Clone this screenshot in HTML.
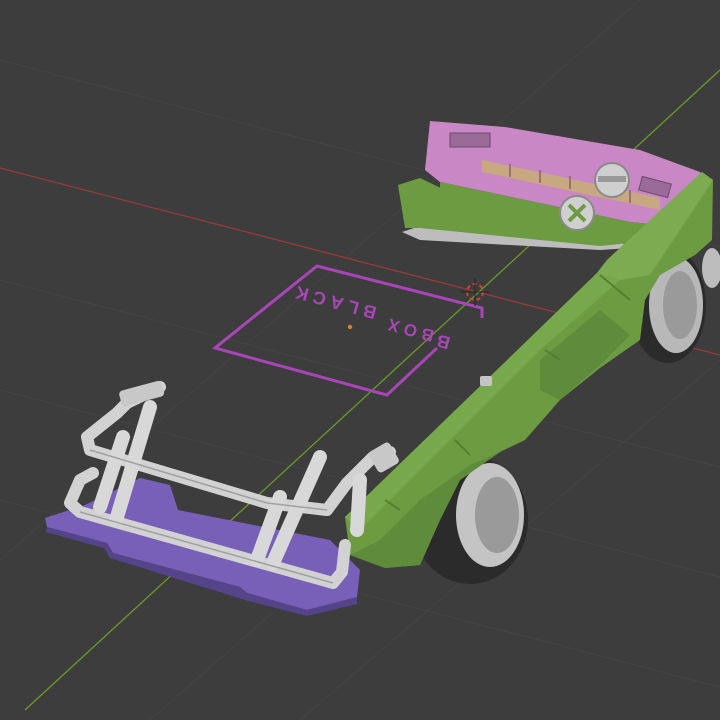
<!DOCTYPE html>
<html><head><meta charset="utf-8"><style>
html,body{margin:0;padding:0;background:#3d3d3d;}
svg{display:block}
</style></head><body>
<svg width="720" height="720" viewBox="0 0 720 720" xmlns="http://www.w3.org/2000/svg">
<rect width="720" height="720" fill="#3d3d3d"/>
<g stroke="#444" stroke-width="1">
<line x1="0" y1="60" x2="720" y2="247"/><line x1="0" y1="280" x2="720" y2="467"/><line x1="0" y1="390" x2="720" y2="577"/><line x1="0" y1="500" x2="720" y2="687"/>
<line x1="0" y1="560" x2="640" y2="0"/><line x1="150" y1="720" x2="720" y2="220"/><line x1="300" y1="720" x2="720" y2="360"/>
</g>
<line x1="0" y1="168" x2="720" y2="355" stroke="#9a3a3a" stroke-width="1.3"/>
<line x1="25" y1="710" x2="720" y2="70" stroke="#6a9a2a" stroke-width="1.3"/>
<!-- purple square -->
<polyline points="482,318 482,308 317,266 215,348 387,395 437,348" fill="none" stroke="#a846b8" stroke-width="3"/>
<g fill="#a846b8" font-family="Liberation Sans, sans-serif" font-weight="bold">
<text transform="translate(335,296) rotate(195)" font-size="18" letter-spacing="5" text-anchor="middle">BLACK</text>
<text transform="translate(410,324) rotate(195)" font-size="17" letter-spacing="5" text-anchor="middle">BOX</text>
<text transform="translate(445,336) rotate(195)" font-size="18" text-anchor="middle">B</text>
</g>
<circle cx="350" cy="327" r="2.2" fill="#e08020"/>
<circle cx="475" cy="292" r="8" fill="none" stroke="#d04040" stroke-width="2" stroke-dasharray="4 3"/>
<line x1="475" y1="278" x2="475" y2="306" stroke="#222" stroke-width="1"/>
<line x1="461" y1="292" x2="489" y2="292" stroke="#222" stroke-width="1"/>
<!-- rear wheel -->
<ellipse cx="712" cy="268" rx="10" ry="20" fill="#bdbdbd"/>
<ellipse cx="668" cy="305" rx="38" ry="58" fill="#2b2b2b"/>
<ellipse cx="676" cy="305" rx="27" ry="48" fill="#b8b8b8"/>
<ellipse cx="680" cy="305" rx="17" ry="34" fill="#9a9a9a"/>
<!-- front wheel -->
<ellipse cx="470" cy="520" rx="58" ry="64" fill="#2b2b2b"/>
<ellipse cx="490" cy="515" rx="34" ry="52" fill="#c4c4c4"/>
<ellipse cx="497" cy="515" rx="22" ry="38" fill="#9a9a9a"/>
<!-- front bumper assembly -->
<polygon points="402,232 420,240 600,250 630,248 612,236 420,226" fill="#bdbdbd"/>
<polygon points="398,185 420,178 445,190 640,225 640,242 600,246 420,228 405,228" fill="#6c9b42"/>
<polygon points="430,121 505,127 640,150 700,172 712,185 690,205 660,225 630,222 440,182 425,170" fill="#c987c5"/>
<g fill="#9a6a98" stroke="#6f4a6d" stroke-width="1">
<rect x="450" y="133" width="40" height="14"/><rect x="640" y="180" width="30" height="14" transform="rotate(15 655 187)"/>
</g>
<polygon points="482,160 660,198 660,210 482,172" fill="#c8a880"/>
<g stroke="#8a6070" stroke-width="1.5"><line x1="510" y1="164" x2="510" y2="177"/><line x1="540" y1="170" x2="540" y2="183"/><line x1="570" y1="176" x2="570" y2="189"/><line x1="630" y1="190" x2="630" y2="203"/></g>
<polygon points="440,182 630,222 660,225 650,236 620,238 440,200" fill="#6c9b42"/>
<circle cx="612" cy="180" r="17" fill="#cfcfcf" stroke="#8a8a8a" stroke-width="2"/>
<rect x="598" y="176" width="28" height="6" fill="#999"/>
<circle cx="577" cy="213" r="17" fill="#cfcfcf" stroke="#8a8a8a" stroke-width="2"/>
<line x1="569" y1="205" x2="585" y2="221" stroke="#6c9b42" stroke-width="4"/><line x1="585" y1="205" x2="569" y2="221" stroke="#6c9b42" stroke-width="4"/>
<!-- green side body -->
<polygon points="345,517 597,273 607,260 702,172 713,180 712,240 695,255 660,275 645,300 640,340 600,368 560,400 525,440 500,452 460,480 440,520 420,565 385,568 350,555" fill="#6c9b42"/>
<polygon points="597,273 607,260 702,172 713,180 700,200 680,230 660,260 650,275 620,280" fill="#7cab52"/>
<polygon points="345,517 597,273 620,280 540,350 480,410 420,470 360,530" fill="#78a84c"/>
<polygon points="540,360 600,310 630,335 600,365 560,400 540,390" fill="#5f8c3a"/>
<polygon points="350,555 385,568 420,565 440,520 460,480 500,452 470,465 420,500 380,540" fill="#5f8c3a"/>
<g stroke="#567f32" stroke-width="2" fill="none">
<path d="M600,275 L630,300 M545,350 L560,360 M455,440 L470,455 M385,500 L400,510"/>
</g>
<!-- purple bumper -->
<polygon points="45,518 85,505 140,478 170,485 178,510 330,540 360,570 357,597 307,610 247,593 240,587 113,553 107,543 47,527" fill="#7860b8"/>
<polygon points="47,527 107,543 113,553 240,587 247,593 307,610 357,597 357,604 307,616 245,600 110,558 104,548 46,532" fill="#55448a"/>
<!-- grey tube frame -->
<g stroke="#d2d2d2" stroke-width="12" fill="none" stroke-linecap="round" stroke-linejoin="round">
<path d="M93,473 L80,480 L70,503 L80,512 L333,583 L342,572 L345,545"/>
<path d="M160,387 L127,403 L117,413 L87,437 L90,450 L267,503 L327,510 L347,483 L373,457 L390,452"/>
</g>
<g stroke="#d8d8d8" stroke-width="14" fill="none" stroke-linecap="round">
<path d="M150,407 L117,517 M123,437 L100,507 M320,457 L273,563 M280,497 L257,560 M360,480 L357,530"/>
</g>
<g stroke="#a0a0a0" stroke-width="1.5" fill="none">
<path d="M80,512 L333,583 M90,450 L267,503 L327,510"/>
</g>
<rect x="120" y="386" width="44" height="16" rx="4" fill="#c8c8c8" transform="rotate(-15 140 395)"/>
<rect x="372" y="446" width="24" height="24" rx="4" fill="#c8c8c8" transform="rotate(-30 383 458)"/>
<rect x="480" y="376" width="12" height="10" rx="2" fill="#c4c4c4"/>
</svg>
</body></html>
